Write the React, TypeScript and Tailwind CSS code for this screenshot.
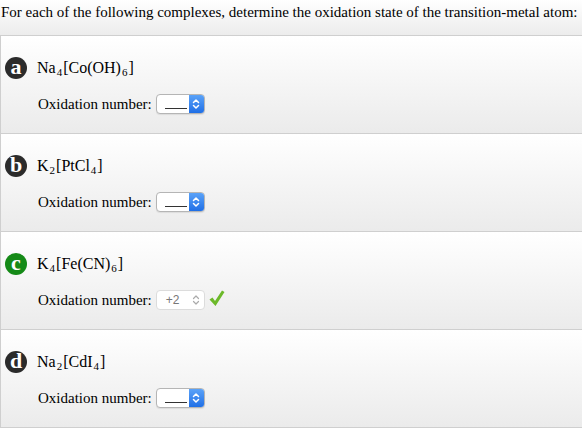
import React from "react";

const serif = { fontFamily: '"Liberation Serif", "Times New Roman", serif' };

function Sub({ children }: { children: React.ReactNode }) {
  return <span className="text-[11px] relative top-[3px] leading-none mx-[1px]">{children}</span>;
}

function Badge({ letter, green }: { letter: string; green?: boolean }) {
  return (
    <div
      className={`w-[22px] h-[22px] rounded-full flex items-center justify-center text-white font-bold text-[22px] leading-none ${green ? "bg-[#158a17]" : "bg-[#2b2b2b]"}`}
      style={serif}
    >
      <span className="relative top-[-1px]">{letter}</span>
    </div>
  );
}

function Select() {
  return (
    <div className="flex h-[20px] w-[49px] rounded-[4px] border border-[#b5b5b5] overflow-hidden bg-white shadow-[0_1px_1px_rgba(0,0,0,0.08)]">
      <div className="flex-1 flex items-end pl-[8px] pb-[4px]">
        <div className="w-[22px] h-[1px] bg-[#333]" />
      </div>
      <div className="w-[15px] h-full bg-gradient-to-b from-[#5aa2f8] to-[#1f6fe6] flex items-center justify-center">
        <svg width="8" height="12" viewBox="0 0 8 12" fill="none" stroke="white" strokeWidth="1.5" strokeLinecap="round" strokeLinejoin="round">
          <path d="M1.5 4.5 L4 2 L6.5 4.5" />
          <path d="M1.5 7.5 L4 10 L6.5 7.5" />
        </svg>
      </div>
    </div>
  );
}

function DoneSelect() {
  return (
    <div className="flex items-center gap-[4px]">
      <div className="flex h-[20px] w-[49px] rounded-[4px] border border-[#dcdcdc] bg-white items-center">
        <span className="flex-1 pl-[9px] text-[12px] text-[#777]" style={{ fontFamily: '"Liberation Sans", Arial, sans-serif' }}>+2</span>
        <div className="w-[15px] flex items-center justify-center">
          <svg width="8" height="12" viewBox="0 0 8 12" fill="none" stroke="#aaa" strokeWidth="1.2" strokeLinecap="round" strokeLinejoin="round">
            <path d="M1.5 4.5 L4 2 L6.5 4.5" />
            <path d="M1.5 7.5 L4 10 L6.5 7.5" />
          </svg>
        </div>
      </div>
      <svg width="16" height="17" viewBox="0 0 16 17" className="relative top-[-2px]">
        <path d="M0.5 9.5 L3.5 7.5 L6 11 L13 0.5 L15.5 2 L6.5 16 Z" fill="#6cb929" />
      </svg>
    </div>
  );
}

function Panel({ letter, green, formula, done }: { letter: string; green?: boolean; formula: React.ReactNode; done?: boolean }) {
  return (
    <div className="h-[98px] border-b border-l border-[#cfcfcf] bg-gradient-to-b from-white to-[#ebebeb] pt-[21px] pl-[4px]">
      <div className="flex items-center h-[22px] gap-[10px]">
        <Badge letter={letter} green={green} />
        <div className="text-[16px] text-black whitespace-nowrap" style={serif}>{formula}</div>
      </div>
      <div className="flex items-center h-[20px] mt-[15px] pl-[33px] gap-[4px]">
        <span className="text-[15px] text-black" style={serif}>Oxidation number:</span>
        {done ? <DoneSelect /> : <Select />}
      </div>
    </div>
  );
}

export default function App() {
  return (
    <div className="w-[582px] h-[432px] bg-white overflow-hidden" style={serif}>
      <div className="h-[36px] border-b border-[#cfcfcf] bg-gradient-to-b from-white to-[#ececec] pt-[2px] pl-[1px]">
        <p className="text-[15px] text-black leading-[20px] whitespace-nowrap">For each of the following complexes, determine the oxidation state of the transition-metal atom:</p>
      </div>
      <Panel letter="a" formula={<>Na<Sub>4</Sub>[Co(OH)<Sub>6</Sub>]</>} />
      <Panel letter="b" formula={<>K<Sub>2</Sub>[PtCl<Sub>4</Sub>]</>} />
      <Panel letter="c" green formula={<>K<Sub>4</Sub>[Fe(CN)<Sub>6</Sub>]</>} done />
      <Panel letter="d" formula={<>Na<Sub>2</Sub>[CdI<Sub>4</Sub>]</>} />
    </div>
  );
}
